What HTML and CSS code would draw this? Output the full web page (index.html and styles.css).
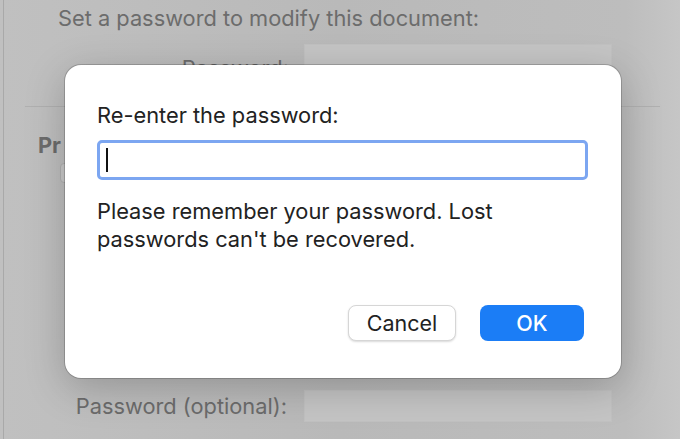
FILE: index.html
```html
<!DOCTYPE html>
<html>
<head>
<meta charset="utf-8">
<link rel="stylesheet" href="styles.css">
</head>
<body>
<div class="sheet">
  <div class="heading">Set a password to modify this document:</div>
  <div class="row row-top">
    <span class="label">Password:</span>
    <span class="field"></span>
  </div>
  <div class="separator"></div>
  <div class="section">Pr</div>
  <div class="check-row"><span class="checkbox"></span></div>
  <div class="spacer"></div>
  <div class="row row-bottom">
    <span class="label">Password (optional):</span>
    <span class="field"></span>
  </div>
</div>

<div class="dialog">
  <div class="prompt">Re-enter the password:</div>
  <div class="input"><span class="caret"></span></div>
  <div class="message">Please remember your password. Lost<br>passwords can't be recovered.</div>
  <div class="buttons">
    <button class="btn btn-cancel">Cancel</button>
    <button class="btn btn-ok">OK</button>
  </div>
</div>
</body>
</html>
```
FILE: styles.css
```css
html, body {
  margin: 0;
  padding: 0;
  width: 680px;
  height: 439px;
  overflow: hidden;
}
body {
  background: linear-gradient(90deg, #c0c0c0 0%, #b9b9b9 50%, #bdbdbd 92%, #c6c6c6 100%);
  font-family: Inter, "Noto Sans", sans-serif;
  position: relative;
}
.sheet {
  margin-left: 3px;
  border-left: 1px solid #a9a9a9;
  height: 439px;
  display: flex;
  flex-direction: column;
  color: #6c6c6c;
}
.heading {
  font-size: 21.8px;
  line-height: 26px;
  padding: 5px 0 0 54px;
}
.row {
  display: flex;
  align-items: center;
}
.label {
  width: 285px;
  text-align: right;
  font-size: 21.8px;
  margin-right: 15px;
}
.field {
  width: 308px;
  height: 32px;
  background: #c5c5c5;
  border: 1px solid #c1c1c1;
  box-sizing: border-box;
}
.row-top {
  margin-top: 13px;
}
.row-top .label {
  padding-top: 8px;
}
.row-top .field {
  height: 40px;
}
.separator {
  margin: 22px 20px 0 21px;
  height: 1px;
  background: #b0b0b0;
}
.section {
  font-size: 21.8px;
  font-weight: 700;
  padding: 25px 0 0 34px;
  line-height: 26px;
}
.check-row {
  padding: 5px 0 0 56px;
}
.checkbox {
  display: block;
  width: 18px;
  height: 18px;
  border-radius: 4px;
  background: #c9c9c9;
  border: 1px solid #b0b0b0;
}
.spacer { flex: 1; }
.row-bottom {
  margin-bottom: 17px;
}
.row-bottom .label { width: 283px; margin-right: 17px; }

.dialog {
  position: absolute;
  left: 65px;
  top: 65px;
  width: 556px;
  height: 313px;
  box-sizing: border-box;
  background: #fff;
  border-radius: 16px;
  box-shadow: 0 0 0 1px rgba(0,0,0,0.18), 0 10px 40px rgba(0,0,0,0.22);
  padding: 37px 33px 0 32px;
  color: #222;
  display: flex;
  flex-direction: column;
}
.prompt {
  font-size: 21.8px;
  line-height: 26px;
}
.input {
  margin-top: 12px;
  height: 40px;
  border: 3px solid #7ca6f1;
  border-radius: 5px;
  box-sizing: border-box;
  display: flex;
  align-items: center;
  padding-left: 6px;
}
.caret {
  width: 2px;
  height: 24px;
  background: #111;
}
.message {
  margin-top: 17px;
  font-size: 21.8px;
  line-height: 28px;
}
.buttons {
  margin-top: 52px;
  display: flex;
  justify-content: flex-end;
  gap: 24px;
  padding-right: 4px;
}
.btn {
  font-family: inherit;
  font-size: 21.5px;
  height: 36px;
  border-radius: 8px;
  box-sizing: border-box;
  cursor: default;
  padding: 0;
}
.btn-cancel {
  width: 108px;
  background: #fff;
  color: #222;
  border: 1px solid #d6d6d6;
  box-shadow: 0 1px 2px rgba(0,0,0,0.15);
}
.btn-ok {
  width: 104px;
  background: #1b7df6;
  color: #fff;
  border: none;
  font-weight: 500;
}
```
